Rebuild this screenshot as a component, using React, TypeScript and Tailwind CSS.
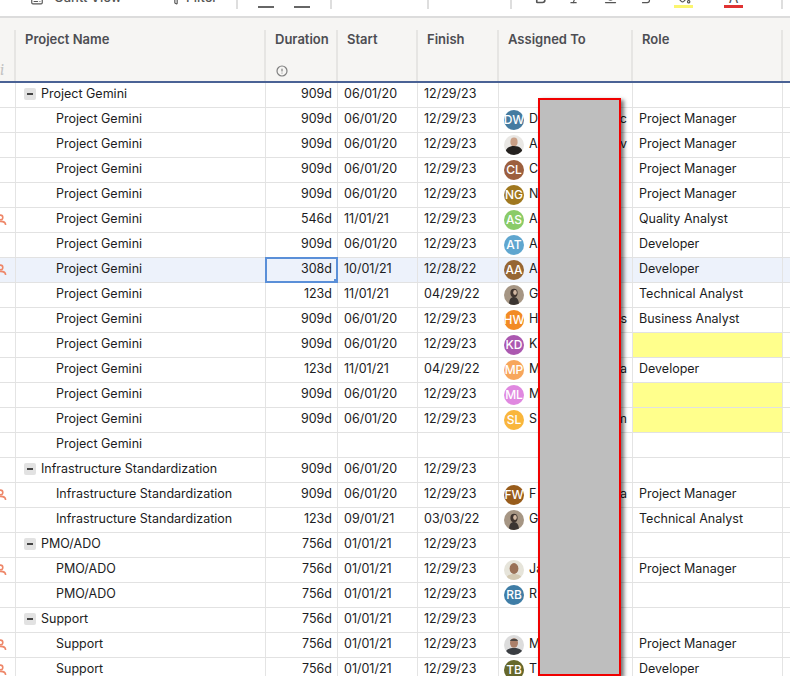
import { AlertCircle, Bold, CalendarRange, Filter, Italic, PaintBucket, Strikethrough, Underline } from "lucide-react";

type Row = {
  name: string;
  group?: boolean;
  dur?: string;
  start?: string;
  finish?: string;
  initials?: string;
  color?: string;
  photo?: "a" | "g" | "j" | "m";
  first?: string;
  tail?: string;
  role?: string;
  yellow?: boolean;
  person?: boolean;
  selected?: boolean;
};

const PG = "Project Gemini";
const IS = "Infrastructure Standardization";
const d909 = { dur: "909d", start: "06/01/20", finish: "12/29/23" };
const d123 = { dur: "123d", start: "11/01/21", finish: "04/29/22" };
const d756 = { dur: "756d", start: "01/01/21", finish: "12/29/23" };

const rows: Row[] = [
  { name: PG, group: true, ...d909 },
  { name: PG, ...d909, initials: "DW", color: "bg-[#457ba0]", first: "D", tail: "tc", role: "Project Manager" },
  { name: PG, ...d909, photo: "a", first: "A", tail: "v", role: "Project Manager" },
  { name: PG, ...d909, initials: "CL", color: "bg-[#9c5f3e]", first: "C", role: "Project Manager" },
  { name: PG, ...d909, initials: "NG", color: "bg-[#a0781f]", first: "N", role: "Project Manager" },
  { name: PG, dur: "546d", start: "11/01/21", finish: "12/29/23", initials: "AS", color: "bg-[#8acb68]", first: "A", role: "Quality Analyst", person: true },
  { name: PG, ...d909, initials: "AT", color: "bg-[#5fa6cf]", first: "A", role: "Developer" },
  { name: PG, dur: "308d", start: "10/01/21", finish: "12/28/22", initials: "AA", color: "bg-[#966633]", first: "A", role: "Developer", person: true, selected: true },
  { name: PG, ...d123, photo: "g", first: "G", role: "Technical Analyst" },
  { name: PG, ...d909, initials: "HW", color: "bg-[#f28a25]", first: "H", tail: "s", role: "Business Analyst" },
  { name: PG, ...d909, initials: "KD", color: "bg-[#ab58b0]", first: "K", yellow: true },
  { name: PG, ...d123, initials: "MP", color: "bg-[#f7a65c]", first: "M", tail: "a", role: "Developer" },
  { name: PG, ...d909, initials: "ML", color: "bg-[#e088e0]", first: "M", yellow: true },
  { name: PG, ...d909, initials: "SL", color: "bg-[#f9b63c]", first: "S", tail: "m", yellow: true },
  { name: PG },
  { name: IS, group: true, ...d909 },
  { name: IS, ...d909, initials: "FW", color: "bg-[#985c1b]", first: "F", tail: "a", role: "Project Manager", person: true },
  { name: IS, dur: "123d", start: "09/01/21", finish: "03/03/22", photo: "g", first: "G", role: "Technical Analyst" },
  { name: "PMO/ADO", group: true, ...d756 },
  { name: "PMO/ADO", ...d756, photo: "j", first: "Ja", role: "Project Manager", person: true },
  { name: "PMO/ADO", ...d756, initials: "RB", color: "bg-[#3f7da6]", first: "R" },
  { name: "Support", group: true, ...d756 },
  { name: "Support", ...d756, photo: "m", first: "M", role: "Project Manager", person: true },
  { name: "Support", ...d756, initials: "TB", color: "bg-[#66682c]", first: "T", role: "Developer", person: true },
];

const gridCols = "grid grid-cols-[16px_250px_72px_80px_81px_134px_150px_7px]";

function Photo({ kind }: { kind: "a" | "g" | "j" | "m" }) {
  if (kind === "a")
    return (
      <svg viewBox="0 0 20 20" className="size-5 rounded-full">
        <rect width="20" height="20" fill="#e9e7e4" />
        <ellipse cx="10" cy="7" rx="3.6" ry="4.4" fill="#c99f86" />
        <path d="M1 20c0-6 3-9 9-9s9 3 9 9z" fill="#24211f" />
      </svg>
    );
  if (kind === "g")
    return (
      <svg viewBox="0 0 20 20" className="size-5 rounded-full">
        <rect width="20" height="20" fill="#a69684" />
        <ellipse cx="10" cy="8" rx="3.6" ry="4.2" fill="#40352f" />
        <ellipse cx="11" cy="7.5" rx="1.8" ry="2.4" fill="#d3b9a3" />
        <path d="M5 20c0-6 2-8 5-8s5 3 5 8z" fill="#3b3532" />
      </svg>
    );
  if (kind === "j")
    return (
      <svg viewBox="0 0 20 20" className="size-5 rounded-full">
        <rect width="20" height="20" fill="#e6e4da" />
        <ellipse cx="10" cy="8.5" rx="4.4" ry="5.4" fill="#9a7157" />
        <path d="M2 20c0-4 3-6 8-6s8 2 8 6z" fill="#d3c9b2" />
      </svg>
    );
  return (
    <svg viewBox="0 0 20 20" className="size-5 rounded-full">
      <rect width="20" height="20" fill="#dcdcdc" />
      <ellipse cx="10" cy="8" rx="4" ry="4.8" fill="#ab7f69" />
      <path d="M6 6c1-3 7-3 8 0z" fill="#4a4440" />
      <path d="M1 20c0-5 3-7 9-7s9 2 9 7z" fill="#3a3d42" />
    </svg>
  );
}

function PersonMark() {
  return (
    <svg viewBox="0 0 12 12" className="size-3 shrink-0 text-[#ee8769]" fill="none" stroke="currentColor" strokeWidth="1.6">
      <circle cx="5.5" cy="3.4" r="2.3" />
      <path d="M1 11c0-2.6 2-3.6 4.6-3.6s5 1 5 3.6" />
    </svg>
  );
}

function ToolGroup({ className, children }: { className: string; children?: React.ReactNode }) {
  return <div className={`flex h-[27px] items-end ${className}`}>{children}</div>;
}

function Toolbar() {
  return (
    <div className="relative h-[18px] overflow-hidden border-b-2 border-[#dcdcdc] bg-white text-[13px] text-[#555]">
      <div className="-mt-[19px] flex h-[28px] items-end">
        <ToolGroup className="w-[238px] border-r-2 border-[#dedede] pb-[2px] pl-[30px]">
          <CalendarRange size={14} className="mr-[10px] mb-[2px]" />
          <span className="w-[115px] font-medium">Gantt View</span>
          <Filter size={14} className="mr-[3px] mb-[2px]" />
          <span className="font-medium">Filter</span>
        </ToolGroup>
        <ToolGroup className="w-[94px] gap-[20px] border-r-2 border-[#dedede] pb-[1px] pl-[20px]">
          <div className="h-[2px] w-4 bg-[#666]" />
          <div className="h-[2px] w-4 bg-[#666]" />
        </ToolGroup>
        <ToolGroup className="w-[97px] border-r-2 border-[#dedede]" />
        <ToolGroup className="w-[83px] justify-center border-r-2 border-[#dedede] pb-[4px]">
          <span className="text-[12px] font-medium">10</span>
        </ToolGroup>
        <ToolGroup className="w-[271px] border-r-2 border-[#dedede] pb-[1px] pl-[21px]">
          <Bold size={15} strokeWidth={2.6} className="mr-[20px] mb-[3px]" />
          <Italic size={14} className="mr-[21px] mb-[3px]" />
          <Underline size={15} className="mr-[21px] mb-[3px]" />
          <Strikethrough size={14} className="mr-[21px] mb-[3px]" />
          <div className="mr-[31px] flex w-[19px] flex-col items-center">
            <PaintBucket size={14} className="mb-[1px]" />
            <div className="h-[3px] w-[19px] bg-[#fbf56f]" />
          </div>
          <div className="flex w-[19px] flex-col items-center">
            <span className="text-[14px] leading-[14px]">A</span>
            <div className="h-[3px] w-[19px] bg-[#e03232]" />
          </div>
        </ToolGroup>
      </div>
    </div>
  );
}

function Header() {
  const cell = "mt-3 border-r-2 border-[#e6e5e3] pt-px pl-[9px] text-[13px] leading-[16px] font-semibold text-[#4d4d52]";
  return (
    <div className={`${gridCols} h-[65px] border-b-2 border-[#4a6295] bg-[#f6f5f3]`}>
      <div className="relative mt-3 overflow-hidden border-r-2 border-[#e6e5e3]">
        <span className="absolute top-[30px] left-0 font-serif text-[16px] leading-[20px] text-[#c2c2c2] italic">i</span>
      </div>
      <div className={cell}>Project Name</div>
      <div className={cell}>
        Duration
        <AlertCircle size={12} strokeWidth={2.4} className="mt-[18px] ml-px text-[#808080]" />
      </div>
      <div className={cell}>Start</div>
      <div className={cell}>Finish</div>
      <div className={`${cell} pl-[8px]`}>Assigned To</div>
      <div className={cell}>Role</div>
      <div />
    </div>
  );
}

function GridRow({ row }: { row: Row }) {
  const line = "border-r border-[#e4e4e4]";
  return (
    <div className={`${gridCols} h-[25px] border-b border-[#e2e2e2] text-[12.5px] leading-[22px] text-[#1c1c22] ${row.selected ? "bg-[#edf2fb]" : ""}`}>
      <div className={`flex items-center justify-end overflow-hidden pr-[8px] ${line}`}>
        {row.person && <PersonMark />}
      </div>
      <div className={`flex items-start ${row.group ? "pl-[8px]" : "pl-[40px]"} ${line}`}>
        {row.group && (
          <span className="mt-[5px] mr-[5px] flex size-3 items-center justify-center rounded-[2px] bg-[#e2e2e2]">
            <span className="h-[2px] w-[6px] bg-[#444]" />
          </span>
        )}
        {row.name}
      </div>
      <div className={`relative pr-[5px] text-right ${line}`}>
        {row.dur}
        {row.selected && (
          <div className="absolute -top-px -right-px -bottom-px -left-px border-2 border-[#5a8fd8]">
            <div className="absolute -right-[2px] -bottom-[2px] size-[4px] bg-[#5a8fd8]" />
          </div>
        )}
      </div>
      <div className={`pl-[6px] ${line}`}>{row.start}</div>
      <div className={`pl-[6px] ${line}`}>{row.finish}</div>
      <div className={`flex items-start pl-[5px] ${line}`}>
        {row.initials && (
          <span className={`mt-[2px] flex size-5 shrink-0 items-center justify-center rounded-full text-[12px] leading-none font-medium text-white ${row.color}`}>
            {row.initials}
          </span>
        )}
        {row.photo && (
          <span className="mt-[2px] shrink-0">
            <Photo kind={row.photo} />
          </span>
        )}
        {row.first && (
          <span className="flex min-w-0 flex-1 justify-between overflow-hidden pr-[5px] pl-[5px]">
            <span>{row.first}</span>
            <span>{row.tail}</span>
          </span>
        )}
      </div>
      <div className={`pl-[6px] ${line} ${row.yellow ? "bg-[#ffff8c]" : ""}`}>{row.role}</div>
      <div />
    </div>
  );
}

export default function App() {
  return (
    <div className="relative h-[676px] w-[790px] overflow-hidden bg-white font-['Inter',sans-serif]">
      <Toolbar />
      <Header />
      {rows.map((row, i) => (
        <GridRow key={i} row={row} />
      ))}
      <div className="absolute top-[98px] left-[538px] h-[578px] w-[83px] border-2 border-[#f00000] bg-[#bebebe] shadow-[3px_2px_4px_rgba(0,0,0,0.55)]" />
    </div>
  );
}
